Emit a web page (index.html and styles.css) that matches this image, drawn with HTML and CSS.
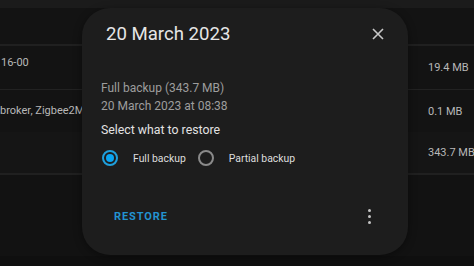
FILE: index.html
```html
<!DOCTYPE html>
<html lang="en">
<head>
    <meta charset="UTF-8">
    <title>Restore backup</title>
    <link rel="stylesheet" href="styles.css">
</head>
<body>

    <div class="page">
        <div class="topbar"></div>
        <div class="list">
            <div class="list-head"></div>
            <div class="row row-first">
                <div class="cell-name"><span class="name-top">16-00</span></div>
                <div class="cell-size">19.4 MB</div>
            </div>
            <div class="row row-second">
                <div class="cell-name"><span class="name-mid">broker, Zigbee2MQTT</span></div>
                <div class="cell-size">0.1 MB</div>
            </div>
            <div class="row row-third">
                <div class="cell-name"></div>
                <div class="cell-size">343.7 MB</div>
            </div>
        </div>
    </div>

    <!-- Diálogo de restauración -->
    <div class="dialog">
        <div class="dialog-head">
            <h2 class="dialog-title">20 March 2023</h2>
            <svg class="close" width="12" height="12" viewBox="0 0 12 12">
                <path d="M1 1 L11 11 M11 1 L1 11" stroke="#c8c8c8" stroke-width="1.6" fill="none"/>
            </svg>
        </div>
        <div class="dialog-body">
            <div class="meta">Full backup (343.7 MB)</div>
            <div class="meta">20 March 2023 at 08:38</div>
            <div class="select">Select what to restore</div>
            <div class="choices">
                <label class="choice"><span class="radio checked"></span>Full backup</label>
                <label class="choice"><span class="radio"></span>Partial backup</label>
            </div>
        </div>
        <div class="dialog-actions">
            <button class="restore">RESTORE</button>
            <span class="kebab"><i></i><i></i><i></i></span>
        </div>
    </div>

</body>
</html>
```

FILE: styles.css
```css
* {
    margin: 0;
    padding: 0;
    box-sizing: border-box;
    font-family: Roboto, "Liberation Sans", sans-serif;
}
body {
    background: #0f0f0f;
    color: #e3e3e3;
    width: 474px;
    height: 266px;
    overflow: hidden;
    position: relative;
}
.page {
    display: flex;
    flex-direction: column;
    height: 256px;
    background: #121212;
}
.topbar {
    height: 8px;
    background: #1b1b1b;
}
.list {
    display: flex;
    flex-direction: column;
}
.list-head {
    height: 38px;
    border-bottom: 2px solid #202020;
    background: #131313;
}
.row {
    display: flex;
    background: #131313;
    font-size: 11px;
    color: #b8b8b8;
}
.row-first {
    height: 44px;
    border-bottom: 1px solid #222;
}
.row-second {
    height: 42px;
}
.row-third {
    height: 43px;
    border-bottom: 2px solid #202020;
    background: #151515;
}
.cell-name {
    flex: 1;
    overflow: hidden;
    white-space: nowrap;
}
.name-top {
    display: block;
    padding: 10px 0 0 1px;
}
.name-mid {
    display: block;
    padding: 14px 0 0 0;
}
.cell-size {
    width: 46px;
    display: flex;
    align-items: center;
    white-space: nowrap;
}
.dialog {
    position: absolute;
    top: 8px;
    left: 82px;
    width: 326px;
    height: 247px;
    background: #1d1d1d;
    border-radius: 28px;
    box-shadow: 0 2px 8px rgba(0, 0, 0, 0.4);
    display: flex;
    flex-direction: column;
}
.dialog-head {
    display: flex;
    align-items: center;
    justify-content: space-between;
    padding: 14px 24px 0 24px;
}
.dialog-title {
    font-size: 18.6px;
    font-weight: 400;
    line-height: 24px;
    color: #e6e6e6;
}
.dialog-body {
    padding: 33px 20px 0 19px;
}
.meta {
    font-size: 12px;
    line-height: 18px;
    color: #9d9d9d;
}
.select {
    margin-top: 6px;
    font-size: 12.3px;
    line-height: 18px;
    color: #e2e2e2;
}
.choices {
    display: flex;
    align-items: center;
    gap: 12px;
    margin-top: 9px;
    padding-left: 1px;
}
.choice {
    display: flex;
    align-items: center;
    gap: 15px;
    font-size: 10.4px;
    color: #dedede;
    height: 20px;
}
.radio {
    width: 16px;
    height: 16px;
    border-radius: 50%;
    border: 2px solid #8a8a8a;
    display: flex;
    align-items: center;
    justify-content: center;
}
.radio.checked {
    border-color: #1f9fdc;
}
.radio.checked::after {
    content: "";
    width: 8px;
    height: 8px;
    border-radius: 50%;
    background: #0aa5f2;
}
.dialog-actions {
    display: flex;
    align-items: center;
    justify-content: space-between;
    padding: 0 37px 0 32px;
    margin-top: 41px;
}
.restore {
    background: none;
    border: none;
    color: #2393d0;
    font-size: 11px;
    font-weight: 700;
    letter-spacing: 0.9px;
}
.kebab {
    display: flex;
    flex-direction: column;
    gap: 3px;
}
.kebab i {
    width: 3px;
    height: 3px;
    border-radius: 50%;
    background: #c4c4c4;
}
```
